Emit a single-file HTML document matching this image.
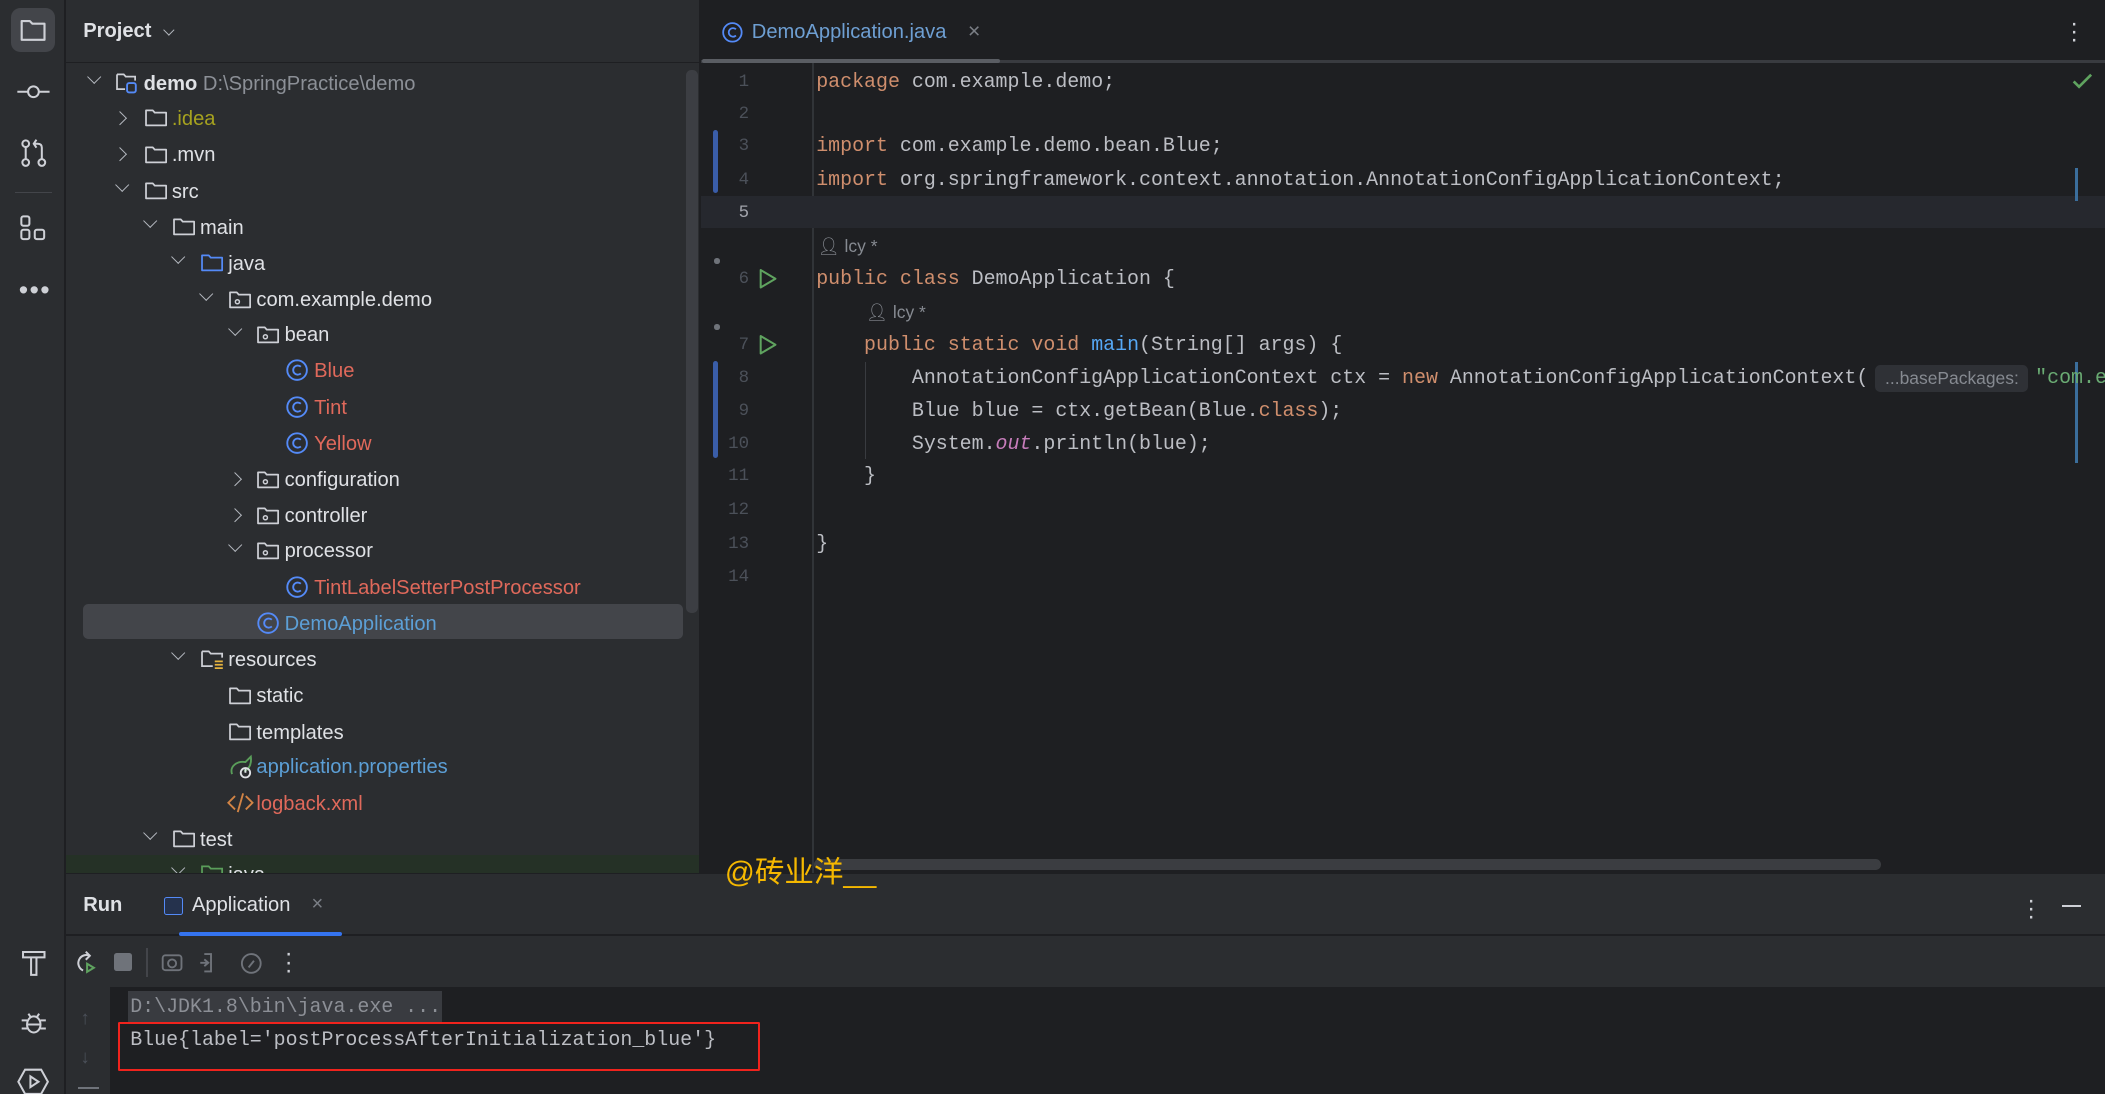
<!DOCTYPE html>
<html><head><meta charset="utf-8"><style>
html,body{margin:0;padding:0;background:#1e1f22;overflow:hidden}
#root{position:relative;width:1568px;height:815px;zoom:1.34247;background:#1e1f22;font-family:"Liberation Sans","Noto Sans CJK SC",sans-serif;color:#dfe1e5}
.a{position:absolute}
.r{position:absolute;height:26px;line-height:26px;font-size:15px;white-space:nowrap;margin-top:2px}
.ch{position:absolute;width:7px;height:7px;border-right:1.4px solid #b4b8bf;border-bottom:1.4px solid #b4b8bf}
.dn{transform:rotate(45deg)}
.rt{transform:rotate(-45deg)}
.code{position:absolute;left:608px;font-family:"Liberation Mono",monospace;font-size:14.85px;color:#bcbec4;white-space:pre;height:24px;line-height:24px;margin-top:1px}
.ln{position:absolute;width:36px;left:522px;text-align:right;font-family:"Liberation Mono",monospace;font-size:13px;color:#4b5059;height:24px;line-height:24px;margin-top:1px}
.k{color:#cf8e6d}.m{color:#56a8f5}
.hint{position:absolute;font-size:13px;color:#868a91}
</style></head><body><div id="root">
<div class="a" style="left:0;top:0;width:48px;height:815px;background:#2b2d30;border-right:1px solid #1e1f22"></div>
<div class="a" style="left:8px;top:6px;width:33px;height:33px;border-radius:7px;background:#43454a"></div>
<svg class="a" style="left:14px;top:13px" width="22" height="20" viewBox="0 0 22 20"><path d="M2 3h6l2 2h9v12H2z" fill="none" stroke="#ced0d6" stroke-width="1.6" stroke-linejoin="round"/></svg>
<svg class="a" style="left:12px;top:60px" width="26" height="16"><line x1="1" y1="8" x2="25" y2="8" stroke="#ced0d6" stroke-width="1.5"/><circle cx="13" cy="8" r="4" fill="#2b2d30" stroke="#ced0d6" stroke-width="1.5"/></svg>
<svg class="a" style="left:14px;top:102px" width="22" height="24" fill="none" stroke="#ced0d6" stroke-width="1.5"><circle cx="5" cy="5" r="2.5"/><circle cx="5" cy="19" r="2.5"/><circle cx="17" cy="19" r="2.5"/><path d="M5 8v8M17 16V8q0-3-3-3h-3M13 2l-2 3 2 3"/></svg>
<div class="a" style="left:11px;top:143px;width:28px;height:1px;background:#43454a"></div>
<svg class="a" style="left:15px;top:160px" width="20" height="20" fill="none" stroke="#ced0d6" stroke-width="1.5"><rect x="1" y="1" width="6" height="7" rx="1.5"/><rect x="1" y="11" width="6" height="7" rx="1.5"/><rect x="11" y="11" width="7" height="7" rx="1.5"/></svg>
<div class="a" style="left:14px;top:205px;font-size:20px;color:#ced0d6;letter-spacing:1px">•••</div>
<svg class="a" style="left:14px;top:706px" width="22" height="22" fill="none" stroke="#ced0d6" stroke-width="1.5"><path d="M3 3h16v4H3zM9 7v13h4V7"/></svg>
<svg class="a" style="left:14px;top:750px" width="22" height="22" fill="none" stroke="#ced0d6" stroke-width="1.5"><ellipse cx="11" cy="13" rx="5" ry="6"/><path d="M7 5l2 3M15 5l-2 3M2 10h4M16 10h4M2 16h4M16 16h4M6 13h10"/></svg>
<svg class="a" style="left:13px;top:795px" width="24" height="22" fill="none" stroke="#ced0d6" stroke-width="1.5"><path d="M6 2h12l5 9-5 9H6L1 11z"/><path d="M10 7l6 4-6 4z"/></svg>

<div class="a" style="left:49px;top:0;width:472px;height:650px;background:#2b2d30"></div>
<div class="a" style="left:49px;top:46px;width:472px;height:1px;background:#1e1f22"></div>
<div class="a" style="left:62px;top:15px;font-size:15px;font-weight:bold;color:#dfe1e5">Project</div>
<div class="ch dn" style="left:123px;top:19px;width:5px;height:5px"></div>
<div class="a" style="left:511px;top:52px;width:9px;height:405px;background:#3c3e43;border-radius:4px"></div>
<div class="a" style="left:62px;top:450px;width:447px;height:26px;background:#43454a;border-radius:4px"></div>
<div class="a" style="left:49px;top:637px;width:472px;height:13px;background:#253126"></div>

<svg width="0" height="0" style="position:absolute"><defs>
<symbol id="fo" viewBox="0 0 18 16"><path d="M1.5 2.5h5l1.5 1.7h8.5v9.5h-15z" fill="none" stroke="#ced0d6" stroke-width="1.3" stroke-linejoin="round"/></symbol>
<symbol id="fb" viewBox="0 0 18 16"><path d="M1.5 2.5h5l1.5 1.7h8.5v9.5h-15z" fill="none" stroke="#548af7" stroke-width="1.3" stroke-linejoin="round"/></symbol>
<symbol id="fp" viewBox="0 0 18 16"><path d="M1.5 2.5h5l1.5 1.7h8.5v9.5h-15z" fill="none" stroke="#ced0d6" stroke-width="1.3" stroke-linejoin="round"/><circle cx="7" cy="9.5" r="1.5" fill="none" stroke="#ced0d6" stroke-width="1.1"/></symbol>
<symbol id="cl" viewBox="0 0 18 18"><circle cx="9" cy="9" r="7.3" fill="none" stroke="#548af7" stroke-width="1.4"/><path d="M11.8 6.5A3.4 3.4 0 1 0 11.8 11.5" fill="none" stroke="#548af7" stroke-width="1.4"/></symbol>
</defs></svg>

<div class="ch dn" style="left:66px;top:54px"></div><svg class="a" style="left:86px;top:53px" width="18" height="18" viewBox="0 0 18 18"><path d="M1.5 2.5h5l1.5 1.7h7v3" fill="none" stroke="#ced0d6" stroke-width="1.3"/><path d="M1.5 2.5v11h6" fill="none" stroke="#ced0d6" stroke-width="1.3"/><rect x="9" y="9" width="6.5" height="7" rx="1.5" fill="none" stroke="#548af7" stroke-width="1.4"/></svg>
<div class="r" style="left:107px;top:48px"><b>demo</b> <span style="color:#8c9097">D:\SpringPractice\demo</span></div>

<div class="ch rt" style="left:86px;top:84px"></div><svg class="a" style="left:107px;top:80px" width="18" height="16"><use href="#fo"/></svg><div class="r" style="left:128px;top:74px;color:#a6a21f">.idea</div>
<div class="ch rt" style="left:86px;top:111px"></div><svg class="a" style="left:107px;top:107px" width="18" height="16"><use href="#fo"/></svg><div class="r" style="left:128px;top:101px">.mvn</div>
<div class="ch dn" style="left:87px;top:134px"></div><svg class="a" style="left:107px;top:134px" width="18" height="16"><use href="#fo"/></svg><div class="r" style="left:128px;top:128px">src</div>
<div class="ch dn" style="left:108px;top:161px"></div><svg class="a" style="left:128px;top:161px" width="18" height="16"><use href="#fo"/></svg><div class="r" style="left:149px;top:155px">main</div>
<div class="ch dn" style="left:129px;top:188px"></div><svg class="a" style="left:149px;top:188px" width="18" height="16"><use href="#fb"/></svg><div class="r" style="left:170px;top:182px">java</div>
<div class="ch dn" style="left:150px;top:215px"></div><svg class="a" style="left:170px;top:215px" width="18" height="16"><use href="#fp"/></svg><div class="r" style="left:191px;top:209px">com.example.demo</div>
<div class="ch dn" style="left:171px;top:241px"></div><svg class="a" style="left:191px;top:241px" width="18" height="16"><use href="#fp"/></svg><div class="r" style="left:212px;top:235px">bean</div>
<svg class="a" style="left:212px;top:267px" width="18" height="18"><use href="#cl"/></svg><div class="r" style="left:234px;top:262px;color:#e0695b">Blue</div>
<svg class="a" style="left:212px;top:294px" width="18" height="18"><use href="#cl"/></svg><div class="r" style="left:234px;top:289px;color:#e0695b">Tint</div>
<svg class="a" style="left:212px;top:321px" width="18" height="18"><use href="#cl"/></svg><div class="r" style="left:234px;top:316px;color:#e0695b">Yellow</div>
<div class="ch rt" style="left:171px;top:353px"></div><svg class="a" style="left:191px;top:349px" width="18" height="16"><use href="#fp"/></svg><div class="r" style="left:212px;top:343px">configuration</div>
<div class="ch rt" style="left:171px;top:380px"></div><svg class="a" style="left:191px;top:376px" width="18" height="16"><use href="#fp"/></svg><div class="r" style="left:212px;top:370px">controller</div>
<div class="ch dn" style="left:171px;top:402px"></div><svg class="a" style="left:191px;top:402px" width="18" height="16"><use href="#fp"/></svg><div class="r" style="left:212px;top:396px">processor</div>
<svg class="a" style="left:212px;top:428px" width="18" height="18"><use href="#cl"/></svg><div class="r" style="left:234px;top:423px;color:#e0695b">TintLabelSetterPostProcessor</div>
<svg class="a" style="left:191px;top:455px" width="18" height="18"><use href="#cl"/></svg><div class="r" style="left:212px;top:450px;color:#5c9fd6">DemoApplication</div>
<div class="ch dn" style="left:129px;top:483px"></div><svg class="a" style="left:149px;top:483px" width="20" height="18" viewBox="0 0 20 18"><path d="M1.5 2.5h5l1.5 1.7h8.5v3M1.5 2.5v11h8" fill="none" stroke="#ced0d6" stroke-width="1.3"/><path d="M11 10h6M11 12.5h6M11 15h6" stroke="#e5b33e" stroke-width="1.3"/></svg><div class="r" style="left:170px;top:477px">resources</div>
<svg class="a" style="left:170px;top:510px" width="18" height="16"><use href="#fo"/></svg><div class="r" style="left:191px;top:504px">static</div>
<svg class="a" style="left:170px;top:537px" width="18" height="16"><use href="#fo"/></svg><div class="r" style="left:191px;top:531px">templates</div>
<svg class="a" style="left:170px;top:562px" width="20" height="20" fill="none" stroke-width="1.4"><path d="M3 15C1 9 7 5 13 6l4-4q1 8-5 11" stroke="#5a9e5a"/><circle cx="13" cy="14" r="3.5" stroke="#dfe1e5"/><path d="M13 10v4" stroke="#dfe1e5"/></svg><div class="r" style="left:191px;top:557px;color:#5c9fd6">application.properties</div>
<svg class="a" style="left:169px;top:590px" width="20" height="16" fill="none" stroke="#d28445" stroke-width="1.4"><path d="M6 3L1 8l5 5M14 3l5 5-5 5M12 1L8 15"/></svg><div class="r" style="left:191px;top:584px;color:#e0695b">logback.xml</div>
<div class="ch dn" style="left:108px;top:617px"></div><svg class="a" style="left:128px;top:617px" width="18" height="16"><use href="#fo"/></svg><div class="r" style="left:149px;top:611px">test</div>
<div class="a" style="left:49px;top:637px;width:472px;height:13px;overflow:hidden"><div class="ch dn" style="left:80px;top:6px"></div><svg class="a" style="left:100px;top:6px" width="18" height="16" viewBox="0 0 18 16"><path d="M1.5 2.5h5l1.5 1.7h8.5v9.5h-15z" fill="none" stroke="#5a9e5a" stroke-width="1.3"/></svg><div class="r" style="left:121px;top:0px">java</div></div>

<div class="a" style="left:521px;top:0;width:1px;height:650px;background:#1e1f22"></div>
<div class="a" style="left:522px;top:45px;width:1046px;height:2px;background:#393b40"></div>
<div class="a" style="left:523px;top:44px;width:222px;height:3px;background:#5a5d63;border-radius:2px"></div>
<svg class="a" style="left:537px;top:16px" width="17" height="17" viewBox="0 0 18 18"><use href="#cl"/></svg>
<div class="a" style="left:560px;top:16px;font-size:15px;color:#6e9fd3">DemoApplication.java</div>
<div class="a" style="left:721px;top:14px;font-size:16px;color:#7a7e85">×</div>
<div class="a" style="left:1540px;top:15px;font-size:18px;color:#ced0d6;line-height:6px;width:10px;text-align:center">·<br>·<br>·</div>
<svg class="a" style="left:1543px;top:54px" width="18" height="14"><path d="M2 7l4 4 9-9" fill="none" stroke="#5fa35f" stroke-width="2"/></svg>
<div class="a" style="left:605px;top:47px;width:1px;height:603px;background:#313438"></div>
<div class="a" style="left:522px;top:146px;width:1046px;height:24px;background:#26282e"></div>
<div class="a" style="left:531px;top:97px;width:4px;height:47px;background:#3a5da8;border-radius:2px"></div>
<div class="a" style="left:531px;top:269px;width:4px;height:72px;background:#3a5da8;border-radius:2px"></div>
<div class="a" style="left:532px;top:192px;width:4px;height:5px;background:#6f737a;border-radius:2px"></div>
<div class="a" style="left:532px;top:241px;width:4px;height:5px;background:#6f737a;border-radius:2px"></div>
<div class="a" style="left:1546px;top:125px;width:2px;height:25px;background:#3b6e9c"></div>
<div class="a" style="left:1546px;top:270px;width:2px;height:75px;background:#3b6e9c"></div>
<div class="a" style="left:644px;top:270px;width:1px;height:72px;background:#393b40"></div>

<div class="ln" style="top:48px">1</div><div class="ln" style="top:72px">2</div><div class="ln" style="top:96px">3</div><div class="ln" style="top:121px">4</div><div class="ln" style="top:146px;color:#a1a3ab">5</div>
<div class="ln" style="top:195px">6</div><div class="ln" style="top:244px">7</div><div class="ln" style="top:269px">8</div><div class="ln" style="top:293px">9</div><div class="ln" style="top:318px">10</div><div class="ln" style="top:342px">11</div><div class="ln" style="top:367px">12</div><div class="ln" style="top:392px">13</div><div class="ln" style="top:417px">14</div>
<svg class="a" style="left:565px;top:200px" width="16" height="16"><path d="M2 1.5l11 6.5-11 6.5z" fill="none" stroke="#5fa35f" stroke-width="1.5" stroke-linejoin="round"/></svg>
<svg class="a" style="left:565px;top:249px" width="16" height="16"><path d="M2 1.5l11 6.5-11 6.5z" fill="none" stroke="#5fa35f" stroke-width="1.5" stroke-linejoin="round"/></svg>

<div class="code" style="top:48px"><span class="k">package</span> com.example.demo;</div>
<div class="code" style="top:96px"><span class="k">import</span> com.example.demo.bean.Blue;</div>
<div class="code" style="top:121px"><span class="k">import</span> org.springframework.context.annotation.AnnotationConfigApplicationContext;</div>
<div class="hint" style="left:609px;top:176px">&#128100;&#xFE0E; lcy *</div>
<div class="code" style="top:195px"><span class="k">public class</span> DemoApplication {</div>
<div class="hint" style="left:645px;top:225px">&#128100;&#xFE0E; lcy *</div>
<div class="code" style="top:244px">    <span class="k">public static void</span> <span class="m">main</span>(String[] args) {</div>
<div class="code" style="top:269px">        AnnotationConfigApplicationContext ctx = <span class="k">new</span> AnnotationConfigApplicationContext(</div>
<div class="a" style="left:1397px;top:272px;width:114px;height:20px;background:#2f3136;border-radius:4px;font-size:13px;color:#868a91;line-height:20px;text-align:center">...basePackages:</div>
<div class="code" style="left:1516px;top:269px;color:#6aab73;width:52px;overflow:hidden">"com.e</div>
<div class="code" style="top:293px">        Blue blue = ctx.getBean(Blue.<span class="k">class</span>);</div>
<div class="code" style="top:318px">        System.<i style="color:#c77dbb">out</i>.println(blue);</div>
<div class="code" style="top:342px">    }</div>
<div class="code" style="top:392px">}</div>
<div class="a" style="left:606px;top:640px;width:795px;height:8px;background:#3b3d41;border-radius:4px"></div>

<div class="a" style="left:49px;top:650px;width:1519px;height:165px;background:#2b2d30;border-top:1px solid #1e1f22"></div>
<div class="a" style="left:540px;top:632px;font-size:22px;color:#f5b800">@砖业洋__</div>
<div class="a" style="left:62px;top:666px;font-size:15px;font-weight:bold">Run</div>
<div class="a" style="left:122px;top:668px;width:13px;height:12px;border:1.3px solid #548af7;border-radius:2px;background:#25324d"></div>
<div class="a" style="left:143px;top:666px;font-size:15px">Application</div>
<div class="a" style="left:232px;top:665px;font-size:15px;color:#7a7e85">×</div>
<div class="a" style="left:1510px;top:668px;font-size:18px;color:#ced0d6;line-height:6px">·<br>·<br>·</div>
<div class="a" style="left:1536px;top:674px;width:14px;height:1.5px;background:#ced0d6"></div>
<div class="a" style="left:49px;top:696px;width:1519px;height:1px;background:#1e1f22"></div>
<div class="a" style="left:133px;top:694px;width:122px;height:3px;background:#3574f0;border-radius:2px"></div>
<svg class="a" style="left:53px;top:707px" width="20" height="20" fill="none" stroke-width="1.5"><path d="M14 5A6 6 0 1 0 9 16" stroke="#ced0d6"/><path d="M11 2l3 3-3 3" stroke="#ced0d6"/><path d="M12 11l5 3-5 3z" stroke="#5fa35f"/></svg>
<div class="a" style="left:85px;top:710px;width:13px;height:13px;background:#6f737a;border-radius:2px"></div>
<div class="a" style="left:109px;top:706px;width:1px;height:22px;background:#43454a"></div>
<svg class="a" style="left:119px;top:708px" width="110" height="18" fill="none" stroke="#6f737a" stroke-width="1.4"><rect x="2" y="4" width="14" height="11" rx="2"/><circle cx="9" cy="10" r="3"/><path d="M33 3h5v13h-5M30 9.5h6M33 7l3 2.5-3 2.5"/><circle cx="68" cy="10" r="7"/><path d="M66 13l4-5"/></svg>
<div class="a" style="left:212px;top:708px;font-size:18px;color:#ced0d6;line-height:6px">·<br>·<br>·</div>
<div class="a" style="left:49px;top:735px;width:1519px;height:80px;background:#1e1f22"></div>
<div class="a" style="left:49px;top:735px;width:33px;height:80px;background:#2b2d30"></div>
<div class="a" style="left:60px;top:750px;font-size:14px;color:#4b5059">↑</div>
<div class="a" style="left:60px;top:779px;font-size:14px;color:#4b5059">↓</div>
<div class="a" style="left:58px;top:810px;width:16px;height:1.5px;background:#6f737a"></div>
<div class="a" style="left:95px;top:738px;width:234px;height:23px;background:#393b40"></div>
<div class="code" style="left:97px;top:737px;color:#8c8f96">D:\JDK1.8\bin\java.exe ...</div>
<div class="code" style="left:97px;top:762px">Blue{label='postProcessAfterInitialization_blue'}</div>
<div class="a" style="left:88px;top:761px;width:475px;height:34px;border:2px solid #f0231d;border-radius:1px"></div>
</div></body></html>
